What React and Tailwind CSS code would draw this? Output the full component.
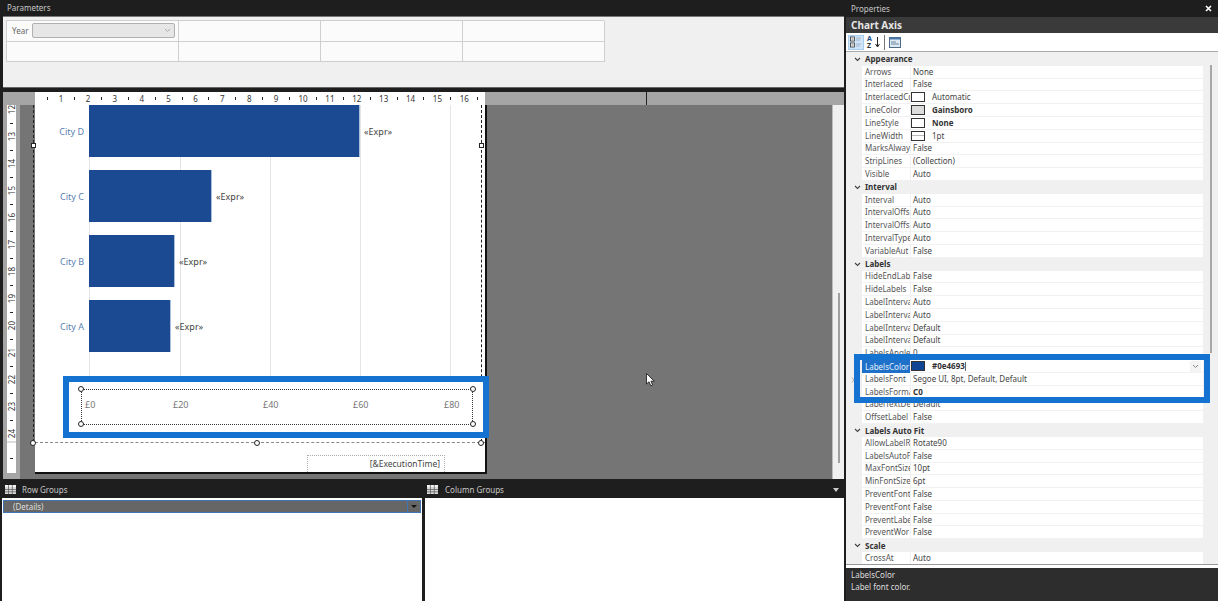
const FONT = "font-['Noto_Sans','Open_Sans',sans-serif]";

const rows = [
  { g: "Appearance" },
  { n: "Arrows", v: "None" },
  { n: "Interlaced", v: "False" },
  { n: "InterlacedCc", v: "Automatic", s: "#ffffff" },
  { n: "LineColor", v: "Gainsboro", s: "#dcdcdc", b: true },
  { n: "LineStyle", v: "None", s: "#ffffff", b: true },
  { n: "LineWidth", v: "1pt", s: "#ffffff", line: true },
  { n: "MarksAlway", v: "False" },
  { n: "StripLines", v: "(Collection)" },
  { n: "Visible", v: "Auto" },
  { g: "Interval" },
  { n: "Interval", v: "Auto" },
  { n: "IntervalOffs", v: "Auto" },
  { n: "IntervalOffs", v: "Auto" },
  { n: "IntervalType", v: "Auto" },
  { n: "VariableAut", v: "False" },
  { g: "Labels" },
  { n: "HideEndLab", v: "False" },
  { n: "HideLabels", v: "False" },
  { n: "LabelInterva", v: "Auto" },
  { n: "LabelInterva", v: "Auto" },
  { n: "LabelInterva", v: "Default" },
  { n: "LabelInterva", v: "Default" },
  { n: "LabelsAngle", v: "0" },
  { n: "LabelsColor", v: "#0e4693", s: "#0e4693", b: true, sel: true },
  { n: "LabelsFont", v: "Segoe UI, 8pt, Default, Default" },
  { n: "LabelsForma", v: "C0", b: true },
  { n: "LabelTextDe", v: "Default" },
  { n: "OffsetLabel", v: "False" },
  { g: "Labels Auto Fit" },
  { n: "AllowLabelR", v: "Rotate90" },
  { n: "LabelsAutoF", v: "False" },
  { n: "MaxFontSize", v: "10pt" },
  { n: "MinFontSize", v: "6pt" },
  { n: "PreventFont", v: "False" },
  { n: "PreventFont", v: "False" },
  { n: "PreventLabe", v: "False" },
  { n: "PreventWor", v: "False" },
  { g: "Scale" },
  { n: "CrossAt", v: "Auto" },
];

function Chevron() {
  return (
    <svg width="7" height="5" viewBox="0 0 7 5" className="shrink-0">
      <path d="M1 1 L3.5 3.5 L6 1" fill="none" stroke="#444" strokeWidth="1.1" />
    </svg>
  );
}

function NameCell({ r }) {
  if (r.sel) {
    return (
      <div className="w-[48px] shrink-0 overflow-hidden pl-[3px] flex items-center text-[8px] leading-none whitespace-nowrap bg-[#1e70c8] text-[#e6f0fb]">
        {r.n}
      </div>
    );
  }
  return (
    <div className="w-[48px] shrink-0 overflow-hidden pl-[3px] flex items-center text-[8px] leading-none whitespace-nowrap bg-white border-b border-[#f2f2f2] text-[#555]">
      {r.n}
    </div>
  );
}

function PropRow({ r }) {
  if (r.g) {
    return (
      <div className="h-[12.8px] flex items-center bg-[#f0f0f0] pl-[8px]">
        <Chevron />
        <span className="ml-[4px] font-bold text-[8px] text-[#333] leading-none whitespace-nowrap">{r.g}</span>
      </div>
    );
  }
  return (
    <div className="h-[12.8px] flex bg-[#f0f0f0] pl-[16px]">
      <NameCell r={r} />
      <div className="ml-px flex-1 bg-white border-b border-[#f2f2f2] flex items-center text-[8px] leading-none text-[#444] whitespace-nowrap">
        {r.s ? (
          <span className="w-[14px] h-[10px] mr-[7px] border border-[#333] flex items-center" style={{ backgroundColor: r.s }}>
            {r.line ? <span className="block w-full h-px bg-[#bbb]" /> : null}
          </span>
        ) : (
          <span className="w-[2px]" />
        )}
        <span className={r.b ? "font-bold text-[#333]" : ""}>{r.v}</span>
        {r.sel ? <span className="w-px h-[9px] bg-[#666]" /> : null}
        {r.sel ? (
          <span className="ml-auto mr-[2px] w-[11px] h-[11px] flex items-center justify-center bg-[#f4f4f4]">
            <svg width="7" height="5" viewBox="0 0 7 5"><path d="M1 1 L3.5 3.5 L6 1" fill="none" stroke="#888" strokeWidth="1" /></svg>
          </span>
        ) : null}
      </div>
    </div>
  );
}

function TopRuler() {
  const items = [];
  for (let i = 1; i <= 16; i++) {
    items.push(<span key={`d${i}`} className="w-[13.45px] flex justify-center"><span className="block w-px h-[3px] bg-[#222]" /></span>);
    items.push(<span key={`n${i}`} className="w-[13.45px] text-center">{i}</span>);
  }
  items.push(<span key="dl" className="w-[13.45px] flex justify-center"><span className="block w-px h-[3px] bg-[#222]" /></span>);
  return (
    <div className="w-[450px] h-[13px] ml-[32px] bg-white flex items-center pl-[6px] text-[8px] text-[#333] leading-none">{items}</div>
  );
}

function SideRuler() {
  const items = [];
  for (let i = 12; i <= 24; i++) {
    items.push(
      <span key={`n${i}`} className="h-[13.5px] shrink-0 flex items-center justify-center">
        <span className="[writing-mode:vertical-rl] rotate-180 text-[8px] leading-none text-[#333]">{i}</span>
      </span>
    );
    if (i < 24) {
      items.push(
        <span key={`d${i}`} className="h-[13.5px] shrink-0 flex items-center justify-center">
          <span className="block w-[3px] h-px bg-[#222]" />
        </span>
      );
    }
  }
  return (
    <div className="w-[17px] shrink-0 bg-[#a5a5a5] pl-[4px] pr-[4px] flex flex-col">
      <div className="bg-white h-[336px] overflow-hidden flex flex-col">
        <div className="-mt-[2px] flex flex-col">{items}</div>
      </div>
      <div className="h-[2px] bg-[#dddddd]" />
      <div className="bg-white h-[30px] flex items-center justify-center">
        <span className="block w-[3px] h-px bg-[#222]" />
      </div>
    </div>
  );
}

function Bar({ name, w, gap }) {
  return (
    <div className={`flex items-center h-[52px] ${gap ? "mb-[13px]" : ""}`}>
      <div className="w-[49px] text-right text-[9px] text-[#5a7fb0] leading-none">{name}</div>
      <div className="ml-[5px] h-full bg-[#1b4a92] border-r border-[#a9bfdc]" style={{ width: w }} />
      <div className="ml-[4px] text-[9px] text-[#444] leading-none">«Expr»</div>
    </div>
  );
}

function Handle({ className }) {
  return <span className={`absolute w-[5px] h-[5px] bg-white border border-[#222] ${className}`} />;
}
function RoundHandle({ className }) {
  return <span className={`absolute w-[6px] h-[6px] rounded-full bg-white border border-[#222] ${className}`} />;
}

function GridIcon() {
  return (
    <svg width="11" height="9" viewBox="0 0 11 9" className="shrink-0">
      <rect width="11" height="9" fill="#d8d8d8" />
      <rect width="11" height="2" fill="#f4f4f4" />
      <path d="M0 4.5H11M0 6.8H11M3.5 0V9M7.3 0V9" stroke="#555" strokeWidth="0.7" />
    </svg>
  );
}

export default function App() {
  return (
    <div className={`${FONT} relative w-[1218px] h-[601px] overflow-hidden bg-[#1e1e1e] flex`}>
      {/* left column */}
      <div className="w-[846px] shrink-0 flex flex-col">
        <div className="h-[16px] flex items-center pl-[7px] text-[8px] text-[#c8c8c8] leading-none">Parameters</div>
        {/* Parameters */}
        <div className="h-[72px] ml-[3px] mr-[2px] bg-[#f0f0f0] border-t border-[#777] pt-[3px] pl-[3px] border-b border-b-[#666]">
          <div className="w-[598px] h-[42px] grid grid-cols-[172px_142px_142px_142px] grid-rows-2 border-t border-l border-[#cfcfcf] bg-[#fbfbfb]">
            <div className="border-r border-b border-[#cfcfcf] flex items-center pl-[5px]">
              <span className="text-[8px] text-[#666] leading-none w-[20px]">Year</span>
              <span className="w-[143px] h-[15px] bg-[#e6e6e6] border border-[#b0b0b0] rounded-[2px] flex items-center justify-end pr-[3px]">
                <svg width="7" height="5" viewBox="0 0 7 5"><path d="M1 1 L3.5 3.5 L6 1" fill="none" stroke="#aaa" strokeWidth="1" /></svg>
              </span>
            </div>
            <div className="border-r border-b border-[#cfcfcf]" />
            <div className="border-r border-b border-[#cfcfcf]" />
            <div className="border-r border-b border-[#cfcfcf]" />
            <div className="border-r border-b border-[#cfcfcf]" />
            <div className="border-r border-b border-[#cfcfcf]" />
            <div className="border-r border-b border-[#cfcfcf]" />
            <div className="border-r border-b border-[#cfcfcf]" />
          </div>
        </div>
        <div className="h-[4px] shrink-0" />
        {/* Design surface */}
        <div className="h-[387px] ml-[3px] mr-[2px] flex flex-col relative">
          <div className="h-[13px] bg-[#a5a5a5] relative">
            <TopRuler />
            <span className="absolute left-[643px] top-0 h-[13px] w-px bg-[#222]" />
          </div>
          <div className="flex-1 flex min-h-0">
            <SideRuler />
            <div className="flex-1 bg-[#757575] flex min-w-0 relative">
              <div className="ml-[15px] w-[452px] h-[369px] bg-white border-r-2 border-b-2 border-[#111] flex flex-col relative">
                <div className="h-[338px] relative border-b border-dashed border-[#888]">
                  <span className="absolute left-[54px] top-0 h-[277px] w-px bg-[#e4e4e4]" />
                  <span className="absolute left-[145px] top-0 h-[277px] w-px bg-[#e4e4e4]" />
                  <span className="absolute left-[235px] top-0 h-[277px] w-px bg-[#e4e4e4]" />
                  <span className="absolute left-[325px] top-0 h-[277px] w-px bg-[#e4e4e4]" />
                  <span className="absolute left-[415px] top-0 h-[277px] w-px bg-[#e4e4e4]" />
                  <div className="relative">
                    <Bar name="City D" w="271px" gap />
                    <Bar name="City C" w="123px" gap />
                    <Bar name="City B" w="86px" gap />
                    <Bar name="City A" w="82px" />
                  </div>
                </div>
                <div className="flex-1 flex justify-end items-end pr-[40px]">
                  <div className="w-[138px] h-[17px] border-t border-l border-r border-dotted border-[#aaa] flex items-center justify-end pr-[4px] text-[8.5px] text-[#444] leading-none">[&amp;ExecutionTime]</div>
                </div>
              </div>
              <span className="absolute left-[13px] top-0 h-[337px] border-l border-dashed border-[#222]" />
              <span className="absolute left-[461px] top-0 h-[337px] border-l border-dashed border-[#222]" />
              <Handle className="left-[11px] top-[38px]" />
              <Handle className="left-[459px] top-[38px]" />
              <RoundHandle className="left-[10px] top-[335px]" />
              <RoundHandle className="left-[234px] top-[335px]" />
              <RoundHandle className="left-[458px] top-[335px]" />
              {/* right scrollbar */}
              <div className="ml-auto w-[12px] bg-[#f0f0f0] border-l border-[#bbb] flex justify-center pt-[188px]">
                <span className="block w-[2px] h-[170px] bg-[#a0a0a0]" />
              </div>
            </div>
          </div>
        </div>
        {/* Groups */}
        <div className="flex-1 flex flex-col">
          <div className="h-[19px] shrink-0 pt-[2px] flex items-center text-[8px] text-[#c8c8c8] leading-none">
            <div className="w-[425px] flex items-center pl-[5px]"><GridIcon /><span className="ml-[6px]">Row Groups</span></div>
            <div className="flex-1 flex items-center pl-[2px]"><GridIcon /><span className="ml-[7px]">Column Groups</span>
              <svg width="6" height="4" viewBox="0 0 6 4" className="ml-auto mr-[7px]"><path d="M0 0H6L3 4Z" fill="#ccc" /></svg>
            </div>
          </div>
          <div className="flex-1 flex">
            <div className="w-[420px] ml-[2px] bg-white pt-[2px] px-px">
              <div className="h-[13px] bg-[#666] border border-[#3f74b5] flex items-center pl-[9px] text-[8px] text-[#ddd] leading-none">
                (Details)
                <span className="ml-auto w-[13px] h-full border-l border-[#3f74b5] flex items-center justify-center">
                  <svg width="6" height="3" viewBox="0 0 6 3"><path d="M0 0H6L3 3Z" fill="#111" /></svg>
                </span>
              </div>
            </div>
            <div className="ml-[3px] w-[419px] bg-white" />
          </div>
        </div>
      </div>

      {/* Properties */}
      <div className="flex-1 flex flex-col min-w-0">
        <div className="h-[17px] shrink-0 flex items-center justify-between pl-[5px] pr-[6px] text-[8px] text-[#c8c8c8] leading-none">
          <span>Properties</span>
          <svg width="7" height="7" viewBox="0 0 7 7"><path d="M1 1L6 6M6 1L1 6" stroke="#fff" strokeWidth="1.6" /></svg>
        </div>
        <div className="h-[16px] shrink-0 bg-[#3a3a3a] flex items-center pl-[5px] text-[10px] font-bold text-[#e6e6e6] leading-none">Chart Axis</div>
        <div className="h-[19px] shrink-0 bg-white border-b border-[#a8a8a8] flex items-center pl-[2px]">
          <span className="w-[16px] h-[15px] bg-[#cfe4f7] border border-[#a9cdec] flex items-center justify-center">
            <svg width="12" height="12" viewBox="0 0 12 12">
              <rect x="0.5" y="1" width="4" height="4" fill="#fff" stroke="#333" strokeWidth="0.8" />
              <rect x="0.5" y="7" width="4" height="4" fill="#fff" stroke="#333" strokeWidth="0.8" />
              <path d="M1.5 3H3.5M1.5 9H3.5" stroke="#333" strokeWidth="0.7" />
              <path d="M6 2H11M6 4H10M6 8H11M6 10H10" stroke="#9bb0c6" strokeWidth="0.9" />
            </svg>
          </span>
          <span className="ml-[3px] w-[8px] flex flex-col text-[7px] font-bold leading-[7px] text-[#1d4e89]">
            <span>A</span><span className="text-[#333]">Z</span>
          </span>
          <svg width="5" height="12" viewBox="0 0 5 12"><path d="M2.5 1V10M0.5 8L2.5 11L4.5 8" fill="none" stroke="#222" strokeWidth="1" /></svg>
          <span className="ml-[4px] w-px h-[15px] bg-[#777]" />
          <svg width="12" height="11" viewBox="0 0 12 11" className="ml-[4px]">
            <rect x="0.5" y="0.5" width="11" height="10" fill="#dfe9f3" stroke="#4b6a88" />
            <rect x="0.5" y="0.5" width="11" height="2" fill="#4b7bab" />
            <path d="M2 5H7M2 7H10" stroke="#5b7a99" strokeWidth="0.9" />
          </svg>
        </div>
        <div className="h-[512px] shrink-0 flex bg-[#f0f0f0] pt-px overflow-hidden">
          <div className="w-[357px] shrink-0">
            {rows.map((r, i) => <PropRow key={i} r={r} />)}
          </div>
          <div className="flex-1 flex justify-center pt-[12px]">
            <span className="block w-[2px] h-[288px] bg-[#a8a8a8]" />
          </div>
        </div>
        <div className="h-px bg-[#999] shrink-0" />
        <div className="h-[3px] bg-white shrink-0" />
        <div className="flex-1 bg-[#2d2d2d] pl-[5px] pt-px text-[8px] text-[#dcdcdc] leading-[12px]">
          <div>LabelsColor</div>
          <div>Label font color.</div>
        </div>
      </div>

      {/* Annotation: chart axis highlight */}
      <div className="absolute left-[63px] top-[376px] w-[426px] h-[62px] border-[6px] border-[#1473d1] bg-white">
        <div className="absolute left-[12px] top-[7px] w-[392px] h-[36px] border border-dotted border-[#333] flex items-center pb-[6px] text-[9px] text-[#777] leading-none">
          <span className="ml-[3px] w-[88px]">£0</span>
          <span className="w-[90px]">£20</span>
          <span className="w-[90px]">£40</span>
          <span className="w-[91px]">£60</span>
          <span>£80</span>
        </div>
        <RoundHandle className="left-[9px] top-[4px]" />
        <RoundHandle className="left-[401px] top-[4px]" />
        <RoundHandle className="left-[9px] top-[39px]" />
        <RoundHandle className="left-[401px] top-[39px]" />
      </div>

      {/* Annotation: property highlight */}
      <div className="absolute left-[854px] top-[354px] w-[356px] h-[49px] border-[6px] border-[#1473d1] pointer-events-none" />
      <svg width="4" height="6" viewBox="0 0 4 6" className="absolute left-[851px] top-[377px]"><path d="M1 0.5L3 3L1 5.5" fill="none" stroke="#aaa" strokeWidth="1" /></svg>

      {/* Mouse cursor */}
      <svg width="10" height="14" viewBox="0 0 10 14" className="absolute left-[646px] top-[373px]">
        <path d="M0.5 0.5V11L3 8.8L4.8 12.8L6.6 12L4.9 8.2H8.3Z" fill="#fff" stroke="#111" strokeWidth="0.8" />
      </svg>
    </div>
  );
}
